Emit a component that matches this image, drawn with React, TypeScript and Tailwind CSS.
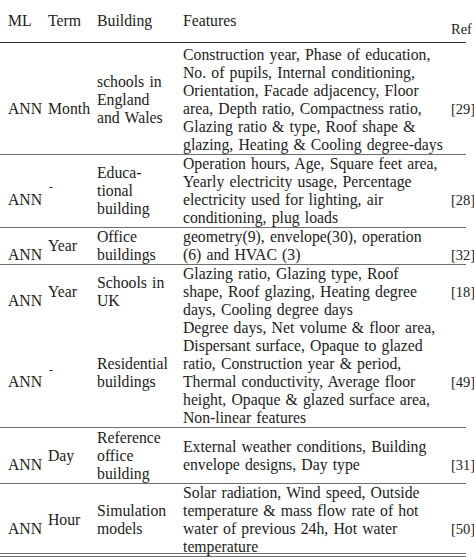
import React from "react";

type Row = {
  ml: string;
  mlPt: string;
  term: string;
  termPt: string;
  termSmall?: boolean;
  building: string[];
  bPt: string;
  features: string[];
  fPt: string;
  ref: string;
  refPt: string;
  border: string;
};

const rows: Row[] = [
  {
    ml: "ANN",
    mlPt: "pt-[57px]",
    term: "Month",
    termPt: "pt-[57px]",
    building: ["schools in", "England", "and Wales"],
    bPt: "pt-[30px]",
    features: [
      "Construction year, Phase of education,",
      "No. of pupils, Internal conditioning,",
      "Orientation, Facade adjacency, Floor",
      "area, Depth ratio, Compactness ratio,",
      "Glazing ratio & type, Roof shape &",
      "glazing, Heating & Cooling degree-days",
    ],
    fPt: "pt-[3px]",
    ref: "[29]",
    refPt: "pt-[57px]",
    border: "border-b border-[#707070]",
  },
  {
    ml: "ANN",
    mlPt: "pt-[36px]",
    term: "-",
    termPt: "pt-[22px]",
    termSmall: true,
    building: ["Educa-", "tional", "building"],
    bPt: "pt-[9px]",
    features: [
      "Operation hours, Age, Square feet area,",
      "Yearly electricity usage, Percentage",
      "electricity used for lighting, air",
      "conditioning, plug loads",
    ],
    fPt: "pt-[0px]",
    ref: "[28]",
    refPt: "pt-[36px]",
    border: "border-b border-[#707070]",
  },
  {
    ml: "ANN",
    mlPt: "pt-[18px]",
    term: "Year",
    termPt: "pt-[9px]",
    building: ["Office", "buildings"],
    bPt: "pt-[0px]",
    features: ["geometry(9), envelope(30), operation", "(6) and HVAC (3)"],
    fPt: "pt-[0px]",
    ref: "[32]",
    refPt: "pt-[18px]",
    border: "border-b border-[#707070]",
  },
  {
    ml: "ANN",
    mlPt: "pt-[27px]",
    term: "Year",
    termPt: "pt-[18px]",
    building: ["Schools in", "UK"],
    bPt: "pt-[9px]",
    features: [
      "Glazing ratio, Glazing type, Roof",
      "shape, Roof glazing, Heating degree",
      "days, Cooling degree days",
    ],
    fPt: "pt-[0px]",
    ref: "[18]",
    refPt: "pt-[18px]",
    border: "",
  },
  {
    ml: "ANN",
    mlPt: "pt-[54px]",
    term: "-",
    termPt: "pt-[41px]",
    termSmall: true,
    building: ["Residential", "buildings"],
    bPt: "pt-[36px]",
    features: [
      "Degree days, Net volume & floor area,",
      "Dispersant surface, Opaque to glazed",
      "ratio, Construction year & period,",
      "Thermal conductivity, Average floor",
      "height, Opaque & glazed surface area,",
      "Non-linear features",
    ],
    fPt: "pt-[0px]",
    ref: "[49]",
    refPt: "pt-[54px]",
    border: "border-b border-[#707070]",
  },
  {
    ml: "ANN",
    mlPt: "pt-[28px]",
    term: "Day",
    termPt: "pt-[19px]",
    building: ["Reference", "office", "building"],
    bPt: "pt-[1px]",
    features: [
      "External weather conditions, Building",
      "envelope designs, Day type",
    ],
    fPt: "pt-[10px]",
    ref: "[31]",
    refPt: "pt-[28px]",
    border: "border-b border-[#707070]",
  },
  {
    ml: "ANN",
    mlPt: "pt-[36px]",
    term: "Hour",
    termPt: "pt-[27px]",
    building: ["Simulation", "models"],
    bPt: "pt-[18px]",
    features: [
      "Solar radiation, Wind speed, Outside",
      "temperature & mass flow rate of hot",
      "water of previous 24h, Hot water",
      "temperature",
    ],
    fPt: "pt-[0px]",
    ref: "[50]",
    refPt: "pt-[36px]",
    border: "",
  },
];

function Lines({ lines }: { lines: string[] }) {
  return (
    <>
      {lines.map((l, i) => (
        <div key={i} className="whitespace-nowrap">
          {l}
        </div>
      ))}
    </>
  );
}

export default function App() {
  return (
    <div
      className="w-[474px] h-[557px] overflow-hidden bg-white text-[#1c1c1c] text-[15.75px] leading-[18px] [word-spacing:1.2px]"
      style={{ fontFamily: '"Liberation Serif", "DejaVu Serif", serif' }}
    >
      <div className="w-[466px]">
        <div className="grid grid-cols-[40px_49px_86px_268px_60px] pl-[8px] h-[43px] border-b border-[#333]">
          <div className="pt-[12px]">ML</div>
          <div className="pt-[12px]">Term</div>
          <div className="pt-[12px]">Building</div>
          <div className="pt-[12px]">Features</div>
          <div className="pt-[20px] whitespace-nowrap text-[14.5px]">Ref</div>
        </div>
        {rows.map((r, i) => (
          <div
            key={i}
            className={`grid grid-cols-[40px_49px_86px_268px_60px] pl-[8px] ${r.border}`}
          >
            <div className={r.mlPt}>{r.ml}</div>
            <div className={r.termPt}>
              {r.termSmall ? (
                <span className="text-[12px] pl-[1px]">{r.term}</span>
              ) : (
                r.term
              )}
            </div>
            <div className={r.bPt}>
              <Lines lines={r.building} />
            </div>
            <div className={r.fPt}>
              <Lines lines={r.features} />
            </div>
            <div className={`${r.refPt} whitespace-nowrap text-[14.5px]`}>{r.ref}</div>
          </div>
        ))}
        <div className="h-px bg-[#707070] mt-[-3px]" />
        <div className="h-px bg-[#707070] mt-[2px]" />
      </div>
    </div>
  );
}
